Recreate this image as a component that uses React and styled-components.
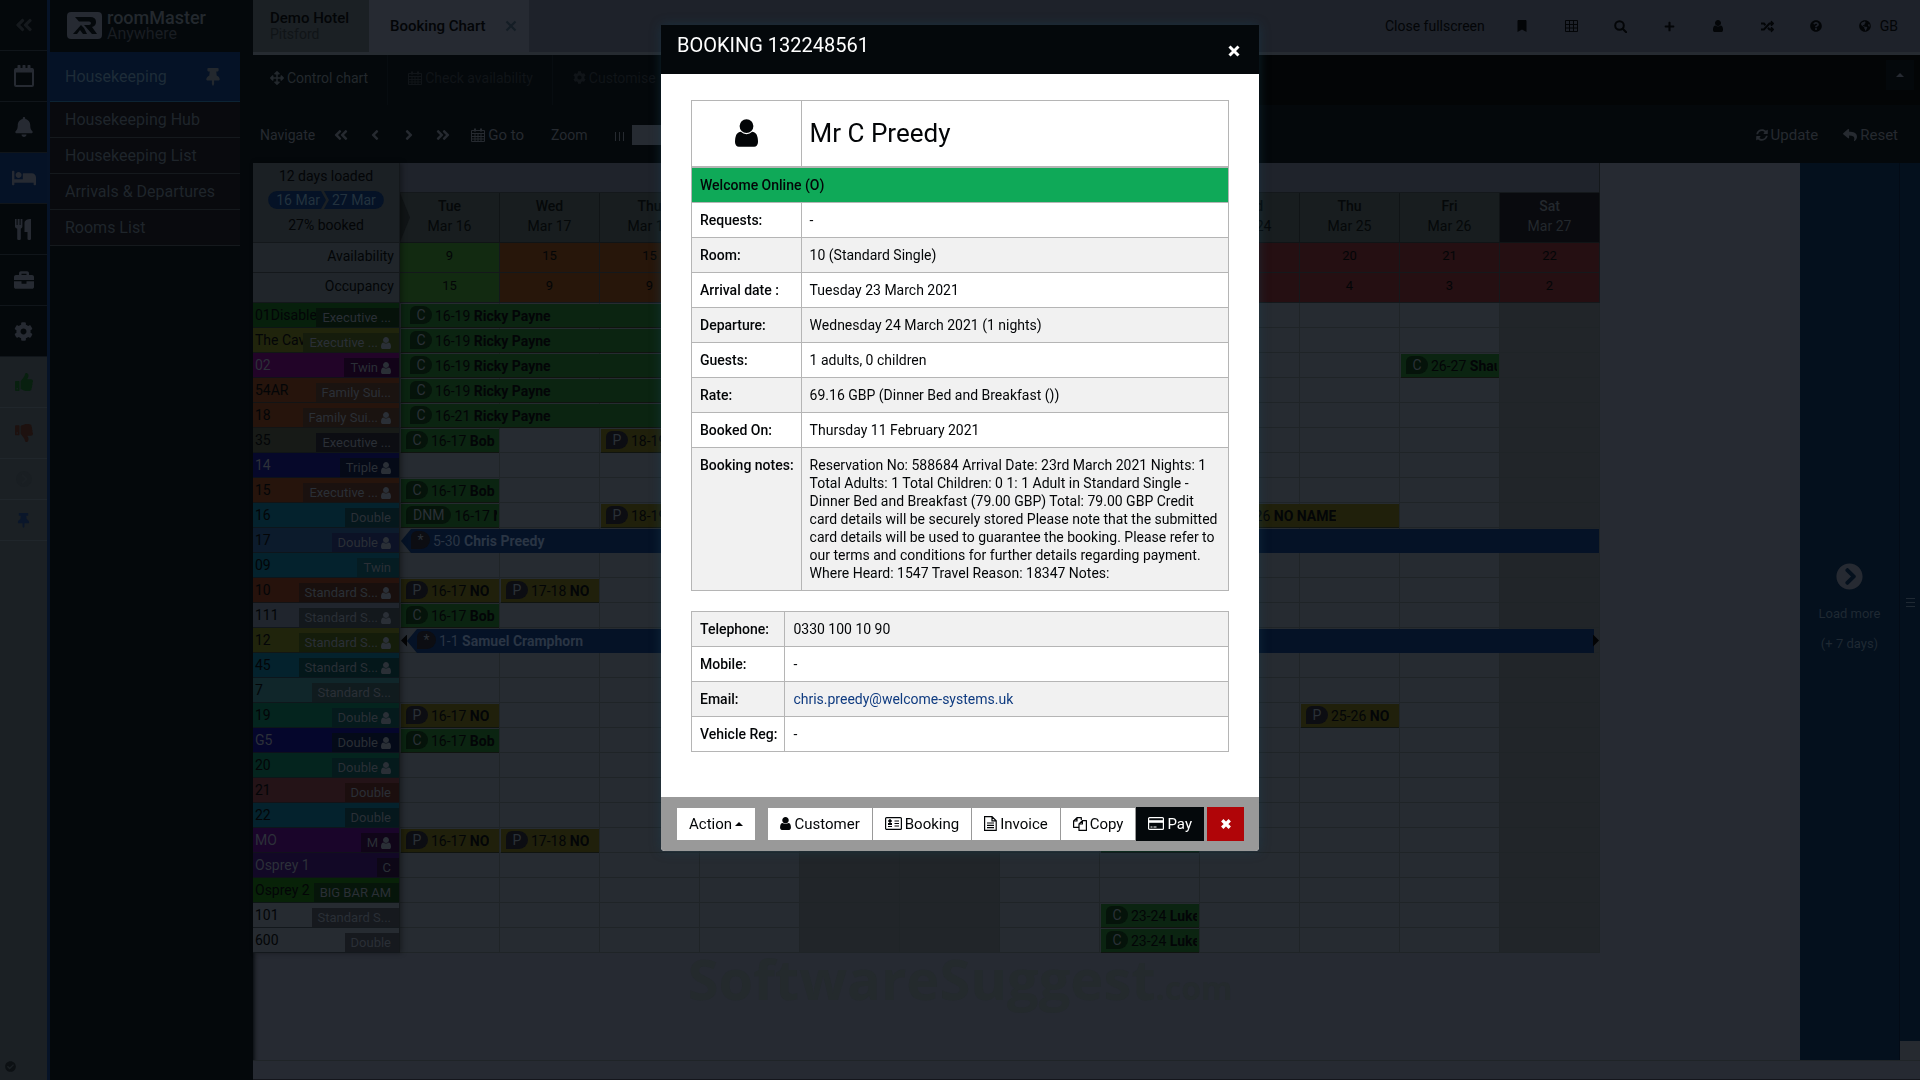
import React, { useState } from "react";
import styled, { createGlobalStyle, css } from "styled-components";
import {
    FaAngleDoubleLeft, FaAngleDoubleRight, FaAngleLeft, FaAngleRight, FaArrowsAlt, FaBed, FaBell,
    FaBookmark, FaBriefcase, FaCheckCircle, FaChevronCircleRight, FaCog, FaGlobeAmericas, FaPlus,
    FaQuestionCircle, FaRandom, FaReply, FaSyncAlt, FaThumbsDown, FaThumbsUp, FaThumbtack,
} from "react-icons/fa";


const GlobalStyle = createGlobalStyle`
    * {
        box-sizing: border-box;
    }

    body {
        margin: 0;
        background: #262a32;
        color: #030507;
        font: 14px/18px Roboto, "Liberation Sans", sans-serif;
        overflow: hidden;
    }

    button {
        margin: 0;
        padding: 0;
        border: 0;
        background: none;
        color: inherit;
        font: inherit;
        cursor: pointer;
    }

    a {
        color: inherit;
        text-decoration: none;
    }

    svg {
        flex: none;
    }
`;

/* ---------- icons ---------- */

const UserIcon = ({ size = 14 }) => (
    <svg width={Math.round(size * 5 / 6)} height={size} viewBox="256 128 1280 1536" fill="currentColor">
        <path d="M1536 1399q0 109-62.5 187t-150.5 78h-854q-88 0-150.5-78t-62.5-187q0-85 8.5-160.5t31.5-152 58.5-131 94-89 134.5-34.5q131 128 313 128t313-128q76 0 134.5 34.5t94 89 58.5 131 31.5 152 8.5 160.5zm-256-887q0 159-112.5 271.5t-271.5 112.5-271.5-112.5-112.5-271.5 112.5-271.5 271.5-112.5 271.5 112.5 112.5 271.5z" />
    </svg>
);

const CrossIcon = ({ size = 12, weight = 3 }) => (
    <svg width={size} height={size} viewBox="0 0 12 12" fill="none" stroke="currentColor" strokeWidth={weight}>
        <path d="M1.500 1.500l9 9M10.500 1.500l-9 9" />
    </svg>
);

const CalendarGridIcon = () => (
    <svg width="14" height="14" viewBox="0 0 14 14" fill="none" stroke="currentColor">
        <path d="M.5 2.5h13v11H.5zM.5 5.5h13M.5 8.5h13M.5 11h13M4 5v8.5M7 5v8.5M10 5v8.5" />
        <path d="M4 .5v3M10 .5v3" strokeWidth="2" />
    </svg>
);

const CalendarIcon = () => (
    <svg width="20" height="22" viewBox="0 0 20 22" fill="none" stroke="currentColor">
        <rect x="1" y="4" width="18" height="17" rx="1" strokeWidth="2" />
        <path d="M1 5.5h18" strokeWidth="4" />
        <path d="M5 1v4M10 1v4M15 1v4" strokeWidth="3" strokeLinecap="round" />
    </svg>
);

const CutleryIcon = () => (
    <svg width="17" height="21" viewBox="0 0 17 21" fill="currentColor">
        <path d="M0 0h1.6v6h1V0h2v6h1V0h1.8v7.5c0 1-.7 1.8-1.6 2.2V20c0 1.300-3.600 1.300-3.600 0V9.700C.9 9.300 0 8.500 0 7.500zM9.500 4C9.500 1.500 12 0 16 0v20c0 1.300-3.500 1.300-3.500 0v-7h-3z" />
    </svg>
);

const TableIcon = () => (
    <svg width="13" height="12" viewBox="0 0 13 12" fill="none" stroke="currentColor">
        <path d="M.5 .5h12v11H.5zM.5 4.500h12M.5 8h12M4.500 .5v11M8.500 .5v11" />
    </svg>
);

const SearchIcon = () => (
    <svg width="13" height="13" viewBox="0 0 13 13" fill="none" stroke="currentColor" strokeWidth="2">
        <circle cx="5.500" cy="5.500" r="4.300" />
        <path d="M8.700 8.700l3.500 3.500" strokeLinecap="round" />
    </svg>
);

const CardIcon = () => (
    <svg width="17" height="13" viewBox="0 0 17 13" fill="none" stroke="currentColor">
        <rect x=".6" y=".6" width="15.800" height="11.800" rx="1" strokeWidth="1.200" />
        <path d="M1 12.500h15" />
        <path d="M3 9.500h4M3 7.500h4M9.500 4h4.500M9.500 6.500h4.500M9.500 9h4.500" />
        <circle cx="5" cy="4" r="1.300" fill="currentColor" />
        <path d="M3 7h4" strokeWidth="2" />
    </svg>
);

const FileIcon = () => (
    <svg width="13" height="15" viewBox="0 0 13 15" fill="none" stroke="currentColor" strokeWidth="1.200">
        <path d="M.6 .6h7.400l4.200 4.200v9.500H.6zM8 .6v4.200h4.200M3 7h7M3 9.300h7M3 11.600h7" />
    </svg>
);

const CopyIcon = () => (
    <svg width="14" height="14" viewBox="0 0 14 14" fill="none" stroke="currentColor" strokeWidth="1.200" strokeLinejoin="round">
        <path d="M6 10.300H.6V4L4 .6h4.300V3M4 .6V4H.6" />
        <path d="M9.400 3.600h4v9.800H6V7zM9.400 3.600V7H6" />
    </svg>
);

const CreditIcon = () => (
    <svg width="16" height="13" viewBox="0 0 16 13" fill="none" stroke="currentColor">
        <rect x=".6" y=".6" width="14.800" height="11.800" rx="1" strokeWidth="1.200" />
        <path d="M1 4.500h14" strokeWidth="2.600" />
        <path d="M2.500 10h2M5.500 10h3" />
    </svg>
);

const CaretUp = ({ width = 8 }) => (
    <svg width={width} height="4" viewBox="0 0 8 4" fill="currentColor">
        <path d="M0 4l4-4 4 4z" />
    </svg>
);

const Logo = () => (
    <svg width="35" height="27" viewBox="0 0 35 27">
        <rect width="35" height="27" rx="4" fill="#262a32" />
        <path d="M8 5h15q6 0 6 5 0 4-4 5l5 7h-5l-8-9h5q2 0 2-1.800T22 9.400H12z" fill="#04080b" />
        <path d="M6 22l8-9 3 3 3 6h-4l-3-4-3 4z" fill="#04080b" />
    </svg>
);

/* ---------- page ---------- */

const Page = styled.div`
    display: flex;
    height: 100vh;
`;

const Rail = styled.nav`
    flex: none;
    display: flex;
    flex-direction: column;
    width: 50px;
    border-right: 3px solid #061327;
    background: #1b2024;
`;

const RailButton = styled.button`
    display: flex;
    align-items: center;
    justify-content: center;
    height: ${props => props.$short ? 41 : 51}px;
    border-bottom: 1px solid ${props => props.$pale ? "#20262b" : "#10151a"};
    background: ${props => props.$active ? "#051226" : props.$pale ? "#1b2024" : "#04080b"};
    color: ${props => props.$color || "#262a32"};
`;

const RailStatus = styled.div`
    margin-top: auto;
    padding: 0 5px 7px;
    color: #0c1013;
    line-height: 12px;
`;

const SidePanel = styled.aside`
    flex: none;
    width: 203px;
    padding-right: 13px;
    background: #04080b;
    color: #23282e;
    font-size: 16px;
`;

const Brand = styled.div`
    display: flex;
    gap: 5px;
    height: 52px;
    padding: 12px 0 0 17px;
`;

const BrandName = styled.div`
    margin-top: -2px;
    font: 500 18px/16px Roboto, sans-serif;

    span {
        display: block;
        color: #191d22;
        font-size: 16px;
        font-weight: 400;
    }
`;

const PanelTitle = styled.a`
    display: flex;
    align-items: center;
    justify-content: space-between;
    height: 50px;
    padding: 0 18px 0 15px;
    border-bottom: 1px solid #0d2434;
    background: #051226;
    color: #1e2c38;
`;

const PanelLink = styled.a`
    display: flex;
    align-items: center;
    height: 36px;
    padding-left: 15px;
    border-bottom: 1px solid #15191d;
    background: #090a0e;
    color: #1f252b;
`;

const Main = styled.main`
    flex: 1;
    min-width: 0;
    display: flex;
    flex-direction: column;
    box-shadow: inset 3px 0 4px -2px #04080b;
`;

const TopBar = styled.header`
    flex: none;
    display: flex;
    height: 55px;
    border-bottom: 3px solid #262b31;
    background: #1e222a;
`;

const HotelTab = styled.div`
    width: 116px;
    padding: 9px 17px;
    background: #1b2024;
    font-size: 15px;
    font-weight: 500;

    span {
        display: block;
        line-height: 14px;
        color: #101417;
        font-size: 14px;
        font-weight: 400;
    }
`;

const ChartTab = styled.div`
    display: flex;
    align-items: center;
    justify-content: space-between;
    width: 160px;
    padding: 0 12px 0 21px;
    background: #262a32;
    font-size: 15px;
    font-weight: 500;

    button {
        display: flex;
        color: #141d25;
    }
`;

const TopActions = styled.div`
    display: flex;
    align-items: center;
    margin-left: auto;
    padding-right: 22px;

    > button {
        display: flex;
        align-items: center;
        justify-content: center;
        gap: 9px;
        width: 49px;
    }

    > button:first-child {
        width: auto;
        margin-right: 13px;
    }

    > button:last-child {
        width: auto;
        margin-left: 18px;
    }
`;

const ControlBar = styled.div`
    flex: none;
    display: flex;
    height: 50px;
    background: linear-gradient(90deg, #04080b 50%, #030506 60%);
`;

const ControlTab = styled.button`
    display: flex;
    align-items: flex-start;
    gap: 3px;
    padding: 14px 19px 0 17px;
    border-right: 1px solid #070c10;
    color: ${props => props.$active ? "#23282d" : "#101418"};

    svg {
        margin-top: 2px;
    }

    & + & {
        padding-left: 20px;
    }
`;

const CollapseButton = styled.button`
    display: flex;
    align-items: center;
    justify-content: center;
    width: 28px;
    height: 30px;
    margin: 5px 6px 0 auto;
    background: #04080b;
    color: #262a32;
`;

const Toolbar = styled.div`
    flex: none;
    display: flex;
    align-items: center;
    height: 58px;
    padding: 2px 22px 0 7px;
    background: #04080b;
    color: #262a30;
`;

const NavGroup = styled.div`
    display: flex;
    gap: 18px;
    padding: 0 20px 0 18px;
`;

const ToolButton = styled.button`
    display: flex;
    align-items: center;
    justify-content: center;
    gap: 3px;
    min-width: 16px;
    font-size: 15px;
`;

const ToolEnd = styled.div`
    display: flex;
    gap: 25px;
    margin-left: auto;
`;

const ZoomLabel = styled.label`
    display: flex;
    align-items: center;
    gap: 28px;
    margin-left: 27px;
`;

const Ticks = styled.span`
    width: 9px;
    height: 9px;
    margin-top: 2px;
    background: repeating-linear-gradient(90deg, #262a30 0 1px, transparent 1px 4px);
`;

const ZoomRange = styled.input`
    appearance: none;
    width: 80px;
    height: 20px;
    margin: 0 0 0 -20px;
    background: #262b32;

    &::-webkit-slider-thumb {
        appearance: none;
    }
`;

/* ---------- chart ---------- */

const Chart = styled.div`
    flex: 1;
    display: flex;
    min-height: 0;
`;

const RoomColumn = styled.div`
    flex: none;
    width: 147px;
    align-self: flex-start;
    position: relative;
    z-index: 1;
    border-right: 1px solid #14181b;
    box-shadow: 2px 0 5px rgba(0, 0, 0, .35), inset 4px 0 4px -2px rgba(4, 8, 11, .6);
`;

const LoadedInfo = styled.div`
    display: flex;
    flex-direction: column;
    align-items: center;
    height: 80px;
    padding-top: 4px;
    border-bottom: 1px solid #14181b;
    background: #1b2024;
`;

const DateRange = styled.div`
    display: flex;
    gap: 2px;
    margin: 6px 0 7px;
    color: #23323e;

    span {
        padding: 0 8px;
        background: #051226;
    }

    span:first-child {
        padding-right: 6px;
        border-radius: 9px 0 0 9px;
        clip-path: polygon(0 0, calc(100% - 5px) 0, 100% 50%, calc(100% - 5px) 100%, 0 100%);
    }

    span:last-child {
        margin-left: -4px;
        border-radius: 0 9px 9px 0;
        clip-path: polygon(0 0, 100% 0, 100% 100%, 0 100%, 5px 50%);
    }
`;

const TotalLabel = styled.div`
    height: 30px;
    padding: 4px 5px 0 0;
    border-bottom: 1px solid #14181b;
    background: #20252a;
    text-align: right;
`;

const Room = styled.div`
    display: flex;
    height: 25px;
    padding: 0 0 1px 2px;
    border-bottom: 1px solid rgba(15, 20, 24, .8);
    background: ${props => props.$bg};
    color: ${props => props.$light ? "#2c3039" : "#030507"};
`;

const RoomName = styled.div`
    flex: 1 1 0;
    min-width: 0;
    padding-top: 3px;
    white-space: nowrap;
`;

const RoomType = styled.div`
    display: flex;
    align-items: center;
    gap: 3px;
    height: 19px;
    margin-top: 5px;
    padding: 0 8px 0 6px;
    background: ${props => props.$bg};
    color: #2a2f36;
    font-size: 13px;
    white-space: nowrap;
`;

const Days = styled.div`
    flex: none;
    align-self: flex-start;
    display: grid;
    grid-template-columns: repeat(12, 100px);
`;

const MonthStrip = styled.div`
    grid-column: 1 / -1;
    height: 30px;
    border-right: 1px solid #14181b;
    border-bottom: 1px solid #14181b;
    background: #1f232b;
`;

const DayHead = styled.div`
    position: relative;
    height: 50px;
    padding-top: 3px;
    border-right: 1px solid #101416;
    border-bottom: 1px solid #101416;
    background: ${props => props.$last ? "#090a0e" : "#181d1f"};
    color: ${props => props.$last ? "#23282d" : "#050809"};
    line-height: 20px;
    text-align: center;

    b {
        display: block;
        font-weight: 500;
    }

    &:nth-child(2)::before {
        content: "";
        position: absolute;
        left: 0;
        top: 0;
        width: 10px;
        height: 49px;
        background: #101416;
        clip-path: polygon(0 0, 100% 50%, 0 100%);
    }
`;

const levels = {
    good: "#122a11",
    middle: "#27160a",
    poor: "#250f12",
};

const Total = styled.div`
    height: 30px;
    padding-top: 4px;
    border-right: 1px solid #14181b;
    border-bottom: 1px solid #14181b;
    background: ${props => levels[props.$level]};
    font-size: 13px;
    text-align: center;
`;

const RoomDays = styled.div`
    grid-column: 1 / -1;
    display: grid;
    grid-template-columns: subgrid;
    height: 25px;
`;

const DayCell = styled.div`
    grid-row: 1;
    grid-column: ${props => props.$day};
    border-right: 1px solid #1f2427;
    border-bottom: 1px solid #1f2427;
    background: ${props => props.$weekend ? "#212529" : "#262b31"};
`;

const Booking = styled.div`
    grid-row: 1;
    grid-column: ${props => props.$from} / span ${props => props.$nights};
    display: flex;
    gap: 3px;
    z-index: 0;
    min-width: 0;
    margin: 1px 1px 0 1px;
    padding: 2px 2px 0 ${props => props.$nights > 1 ? 9 : 5}px;
    border-bottom: 1px solid #10140f;
    background: ${props => props.$kind === "P" ? "#20200b" : "#0b2411"};
    overflow: hidden;
    white-space: nowrap;

    b {
        font-weight: 700;
    }

    ${props => props.$kind === "*" && css`
        padding-left: 10px;
        border-bottom: 0;
        background: #051226;
        color: #2a3544;
        clip-path: polygon(10px 0, 100% 0, 100% 100%, 10px 100%, 0 50%);
    `}

    ${props => props.$open && css`
        margin-left: 7px;
        margin-right: 6px;
    `}
`;

const BookingText = styled.span`
    min-width: 0;
    padding-top: 1px;
    overflow: hidden;
`;

const Status = styled.span`
    flex: none;
    align-self: flex-start;
    min-width: ${props => props.$kind === "*" ? 19 : 22}px;
    height: 18px;
    padding: 0 ${props => props.$kind === "DNM" ? 7 : 6}px;
    border-radius: 6px 9px 9px 0;
    background: ${props => props.$kind === "P" || props.$kind === "*" ? "#0c0d12" : "#05130a"};
    color: #2a3036;
    line-height: 18px;
    text-align: center;
`;

const OpenEnd = styled.div`
    grid-row: 1;
    grid-column: ${props => props.$right ? 12 : 1};
    justify-self: ${props => props.$right ? "end" : "start"};
    align-self: center;
    z-index: 1;
    width: 6px;
    height: 12px;
    margin: 0 1px;
    background: #030405;
    clip-path: ${props => props.$right ? "polygon(0 0, 100% 50%, 0 100%)" : "polygon(100% 0, 0 50%, 100% 100%)"};
`;

const LoadMore = styled.button`
    display: flex;
    flex-direction: column;
    align-items: center;
    justify-content: center;
    gap: 12px;
    width: 100px;
    padding-bottom: 8px;
    margin-left: auto;
    border-right: 1px solid #030b16;
    background: #04101d;
    color: #1f2933;
    font-size: 13px;

    svg {
        margin-bottom: 3px;
        color: #262a32;
    }
`;

const Handle = styled.div`
    display: flex;
    flex-direction: column;
    align-items: center;
    justify-content: center;
    width: 20px;
    border-bottom: 19px solid #262a30;
    background: #04101d;

    &::before {
        content: "";
        width: 9px;
        height: 9px;
        background: repeating-linear-gradient(#1f2933 0 1px, transparent 1px 4px);
    }
`;

const BottomBar = styled.div`
    flex: none;
    height: 20px;
    border-top: 1px solid #1f2427;
    border-bottom: 1px solid #14161c;
    background: #262a32;
`;

const Watermark = styled.div`
    position: fixed;
    right: 0;
    bottom: 62px;
    left: 0;
    color: #242a2d;
    font: 700 56px/60px "Open Sans", sans-serif;
    text-align: center;
    pointer-events: none;

    small {
        font-size: 32px;
    }
`;

/* ---------- booking dialog ---------- */

const Dialog = styled.section`
    position: fixed;
    top: 25px;
    left: 50%;
    width: 598px;
    margin-left: -299px;
    z-index: 5;
    border-radius: 4px;
    background: #fff;
    box-shadow: 0 0 12px rgba(24, 66, 88, .45);
`;

const DialogHeader = styled.header`
    display: flex;
    align-items: flex-start;
    justify-content: space-between;
    height: 49px;
    padding: 10px 8px 0 16px;
    background: #04080b;
    color: #fff;

    h2 {
        margin: 0;
        font: 400 20px/20px Roboto, sans-serif;
    }

    button {
        display: flex;
        align-items: center;
        justify-content: center;
        width: 34px;
        height: 32px;
        color: #fff;
    }
`;

const DialogBody = styled.div`
    padding: 26px 30px 45px;
`;

const Details = styled.table`
    width: 100%;
    margin-bottom: 20px;
    border-collapse: collapse;

    &:last-child {
        margin-bottom: 0;
    }

    th,
    td {
        padding: 8px;
        border: 1px solid #b5b5b5;
        text-align: left;
        vertical-align: top;
    }

    th {
        width: ${props => props.$labels}px;
        padding-right: 7px;
        font-weight: 500;
        white-space: nowrap;
    }

    a {
        color: #0f3b80;
    }
`;

const DetailRow = styled.tr`
    background: ${props => props.$shade ? "#f1f1f1" : "#fff"};
`;

const GuestRow = styled.tr`
    height: 66px;

    && th,
    && td {
        border-bottom-width: 2px;
        vertical-align: middle;
        font-size: 26px;
        line-height: 30px;
    }

    && th {
        text-align: center;
    }

    svg {
        display: block;
        margin: 0 auto;
    }
`;

const SourceRow = styled.tr`
    background: #0fa958;
`;

const DialogFooter = styled.footer`
    display: flex;
    align-items: center;
    height: 54px;
    padding: 0 15px 0 16px;
    border-radius: 0 0 4px 4px;
    background: #999;
`;

const ButtonGroup = styled.div`
    display: flex;
    align-items: center;
    gap: 1px;
    margin-left: auto;
`;

const FooterButton = styled.button`
    display: flex;
    align-items: center;
    gap: 3px;
    height: 32px;
    padding: 0 12px;
    background: #fff;
    font-size: 15px;

    ${props => props.$tone && css`
        height: 34px;
        background: ${props.$tone};
        color: #fff;
    `}

    ${props => props.$last && css`
        justify-content: center;
        width: 37px;
        margin-left: 2px;
        padding: 0;
    `}
`;


const days = [
    ["Tue", "Mar 16", 9, 15, "good"],
    ["Wed", "Mar 17", 15, 9, "middle"],
    ["Thu", "Mar 18", 15, 9, "middle"],
    ["Fri", "Mar 19", 18, 6, "middle"],
    ["Sat", "Mar 20", 18, 6, "middle"],
    ["Sun", "Mar 21", 19, 5, "poor"],
    ["Mon", "Mar 22", 19, 5, "poor"],
    ["Tue", "Mar 23", 18, 6, "poor"],
    ["Wed", "Mar 24", 19, 5, "poor"],
    ["Thu", "Mar 25", 20, 4, "poor"],
    ["Fri", "Mar 26", 21, 3, "poor"],
    ["Sat", "Mar 27", 22, 2, "poor"],
];

const weekend = [5, 6, 12];

const ricky = (dates, nights) => ["C", dates, "Ricky Payne", 1, nights];
const bob = ["C", "16-17", "Bob", 1, 1];

// name, type, has guest, colour, type colour, light text, bookings [kind, dates, guest, from, nights]
const rooms = [
    ["01Disabled", "Executive ...", 0, "#07200c", "#06120a", 0, [ricky("16-19", 3)]],
    ["The Cave", "Executive ...", 1, "#20240c", "#151c0c", 0, [ricky("16-19", 3)]],
    ["02", "Twin", 1, "#220428", "#120318", 1, [ricky("16-19", 3), ["C", "26-27", "Shaun", 11, 1]]],
    ["54AR", "Family Sui...", 0, "#26140c", "#1a1310", 0, [ricky("16-19", 3)]],
    ["18", "Family Sui...", 1, "#26140c", "#1a1310", 0, [ricky("16-21", 5)]],
    ["35", "Executive ...", 0, "#171a17", "#0c0d12", 0, [bob, ["P", "18-19", "NO", 3, 1]]],
    ["14", "Triple", 1, "#06082a", "#050a17", 1, []],
    ["15", "Executive ...", 1, "#26140c", "#1a110f", 0, [bob]],
    ["16", "Double", 0, "#04222d", "#05171c", 0, [
        ["DNM", "16-17", "Name", 1, 1], ["P", "18-19", "NO", 3, 1], ["P", "24-26", "NO NAME", 9, 2],
    ]],
    ["17", "Double", 1, "#0c1b2c", "#0c1226", 0, [["*", "5-30", "Chris Preedy", 1, 12]]],
    ["09", "Twin", 0, "#04222d", "#051c22", 0, []],
    ["10", "Standard S...", 1, "#26120c", "#180f0d", 0, [["P", "16-17", "NO", 1, 1], ["P", "17-18", "NO", 2, 1]]],
    ["111", "Standard S...", 1, "#20252d", "#13181c", 0, [bob]],
    ["12", "Standard S...", 1, "#20240c", "#141c0a", 0, [["*", "1-1", "Samuel Cramphorn", 1, 12, true]]],
    ["45", "Standard S...", 1, "#04222d", "#04171a", 0, []],
    ["7", "Standard S...", 0, "#10262a", "#101b1e", 0, []],
    ["19", "Double", 1, "#04241e", "#051a1c", 0, [["P", "16-17", "NO", 1, 1], ["P", "25-26", "NO", 10, 1]]],
    ["G5", "Double", 1, "#05062c", "#040a18", 1, [bob]],
    ["20", "Double", 1, "#04241e", "#051a1c", 0, []],
    ["21", "Double", 0, "#241317", "#1b0e0e", 0, []],
    ["22", "Double", 0, "#04222d", "#05171c", 0, []],
    ["MO", "M", 1, "#1a052a", "#100518", 1, [
        ["P", "16-17", "NO", 1, 1], ["P", "17-18", "NO", 2, 1], ["C", "23-24", "Luke", 8, 1],
    ]],
    ["Osprey 1", "C", 0, "#120826", "#0d0716", 1, []],
    ["Osprey 2", "BIG BAR AM", 0, "#082208", "#06150a", 0, []],
    ["101", "Standard S...", 0, "#262b31", "#16191e", 0, [["C", "23-24", "Luke", 8, 1]]],
    ["600", "Double", 0, "#262b31", "#16191e", 0, [["C", "23-24", "Luke", 8, 1]]],
];

const bookingDetails = [
    ["Requests:", "-"],
    ["Room:", "10 (Standard Single)"],
    ["Arrival date :", "Tuesday 23 March 2021"],
    ["Departure:", "Wednesday 24 March 2021 (1 nights)"],
    ["Guests:", "1 adults, 0 children"],
    ["Rate:", "69.16 GBP (Dinner Bed and Breakfast ())"],
    ["Booked On:", "Thursday 11 February 2021"],
    ["Booking notes:", "Reservation No: 588684 Arrival Date: 23rd March 2021 Nights: 1 Total Adults: 1 Total Children: 0 1: 1 Adult in Standard Single - Dinner Bed and Breakfast (79.00 GBP) Total: 79.00 GBP Credit card details will be securely stored Please note that the submitted card details will be used to guarantee the booking. Please refer to our terms and conditions for further details regarding payment. Where Heard: 1547 Travel Reason: 18347 Notes:"],
];

const contactDetails = [
    ["Telephone:", "0330 100 10 90"],
    ["Mobile:", "-"],
    ["Email:", <a href="mailto:chris.preedy@welcome-systems.uk">chris.preedy@welcome-systems.uk</a>],
    ["Vehicle Reg:", "-"],
];


const SideRail = () => (
    <Rail>
        <RailButton aria-label="Collapse"><FaAngleDoubleLeft size={20} color="#15191d" /></RailButton>
        <RailButton aria-label="Calendar"><CalendarIcon /></RailButton>
        <RailButton aria-label="Alerts"><FaBell size={20} /></RailButton>
        <RailButton aria-label="Housekeeping" $active><FaBed size={24} /></RailButton>
        <RailButton aria-label="Restaurant"><CutleryIcon /></RailButton>
        <RailButton aria-label="Business"><FaBriefcase size={20} /></RailButton>
        <RailButton aria-label="Settings"><FaCog size={19} /></RailButton>
        <RailButton aria-label="Like" $pale $color="#08200f"><FaThumbsUp size={18} /></RailButton>
        <RailButton aria-label="Dislike" $pale $color="#1d110f"><FaThumbsDown size={18} /></RailButton>
        <RailButton aria-label="Add" $pale $short $color="#191e22"><FaChevronCircleRight size={16} /></RailButton>
        <RailButton aria-label="Pin" $pale $short $color="#0a162a"><FaThumbtack size={15} /></RailButton>
        <RailStatus><FaCheckCircle size={11} /></RailStatus>
    </Rail>
);

const SideMenu = () => (
    <SidePanel>
        <Brand>
            <Logo />
            <BrandName>roomMaster<span>Anywhere</span></BrandName>
        </Brand>
        <PanelTitle href="#housekeeping">Housekeeping <FaThumbtack size={18} color="#23282e" /></PanelTitle>
        {["Housekeeping Hub", "Housekeeping List", "Arrivals & Departures", "Rooms List"].map(item => (
            <PanelLink href="#menu" key={item}>{item}</PanelLink>
        ))}
    </SidePanel>
);

const BookingChart = () => (
    <Chart>
        <RoomColumn>
            <LoadedInfo>
                12 days loaded
                <DateRange><span>16 Mar</span><span>27 Mar</span></DateRange>
                27% booked
            </LoadedInfo>
            <TotalLabel>Availability</TotalLabel>
            <TotalLabel>Occupancy</TotalLabel>
            {rooms.map(([name, type, guest, bg, typeBg, light]) => (
                <Room key={name} $bg={bg} $light={light}>
                    <RoomName>{name}</RoomName>
                    <RoomType $bg={typeBg}>{type}{guest ? <UserIcon size={12} /> : null}</RoomType>
                </Room>
            ))}
        </RoomColumn>
        <Days>
            <MonthStrip />
            {days.map(([day, date], index) => (
                <DayHead key={date} $last={index === 11}><b>{day}</b>{date}</DayHead>
            ))}
            {days.map(day => <Total key={day[1]} $level={day[4]}>{day[2]}</Total>)}
            {days.map(day => <Total key={day[1]} $level={day[4]}>{day[3]}</Total>)}
            {rooms.map(room => (
                <RoomDays key={room[0]}>
                    {days.map((day, index) => (
                        <DayCell key={day[1]} $day={index + 1} $weekend={weekend.includes(index + 1)} />
                    ))}
                    {room[6].map(([kind, dates, guest, from, nights, open]) => (
                        <React.Fragment key={from}>
                            <Booking $kind={kind} $from={from} $nights={nights} $open={open}>
                                <Status $kind={kind}>{kind}</Status>
                                <BookingText>{dates} <b>{guest}</b></BookingText>
                            </Booking>
                            {open && <OpenEnd />}
                            {open && <OpenEnd $right />}
                        </React.Fragment>
                    ))}
                </RoomDays>
            ))}
        </Days>
        <LoadMore>
            <FaChevronCircleRight size={27} />
            <span>Load more</span>
            <span>(+ 7 days)</span>
        </LoadMore>
        <Handle />
    </Chart>
);

const BookingDialog = ({ onClose }) => (
    <Dialog role="dialog" aria-labelledby="booking-title">
        <DialogHeader>
            <h2 id="booking-title">BOOKING 132248561</h2>
            <button aria-label="Close" onClick={onClose}><CrossIcon size={12} /></button>
        </DialogHeader>
        <DialogBody>
            <Details $labels={109}>
                <tbody>
                    <GuestRow>
                        <th><UserIcon size={28} /></th>
                        <td>Mr C Preedy</td>
                    </GuestRow>
                    <SourceRow><th colSpan="2">Welcome Online (O)</th></SourceRow>
                    {bookingDetails.map(([label, value], index) => (
                        <DetailRow key={label} $shade={index % 2 === 1}>
                            <th scope="row">{label}</th>
                            <td>{value}</td>
                        </DetailRow>
                    ))}
                </tbody>
            </Details>
            <Details $labels={92}>
                <tbody>
                    {contactDetails.map(([label, value], index) => (
                        <DetailRow key={label} $shade={index % 2 === 0}>
                            <th scope="row">{label}</th>
                            <td>{value}</td>
                        </DetailRow>
                    ))}
                </tbody>
            </Details>
        </DialogBody>
        <DialogFooter>
            <FooterButton>Action <CaretUp /></FooterButton>
            <ButtonGroup>
                <FooterButton><UserIcon size={13} />Customer</FooterButton>
                <FooterButton><CardIcon />Booking</FooterButton>
                <FooterButton><FileIcon />Invoice</FooterButton>
                <FooterButton><CopyIcon />Copy</FooterButton>
                <FooterButton $tone="#04080b"><CreditIcon />Pay</FooterButton>
                <FooterButton $tone="#b00508" $last aria-label="Cancel booking" onClick={onClose}>
                    <CrossIcon size={10} weight={4} />
                </FooterButton>
            </ButtonGroup>
        </DialogFooter>
    </Dialog>
);

const App = () => {
    const [open, setOpen] = useState(true);

    return (
        <>
            <GlobalStyle />
            <Page>
                <SideRail />
                <SideMenu />
                <Main>
                    <TopBar>
                        <HotelTab>Demo Hotel<span>Pitsford</span></HotelTab>
                        <ChartTab>
                            Booking Chart
                            <button aria-label="Close tab"><CrossIcon size={12} weight={2} /></button>
                        </ChartTab>
                        <TopActions>
                            <button>Close fullscreen</button>
                            <button aria-label="Bookmarks"><FaBookmark size={12} /></button>
                            <button aria-label="Table"><TableIcon /></button>
                            <button aria-label="Search"><SearchIcon /></button>
                            <button aria-label="Add"><FaPlus size={11} /></button>
                            <button aria-label="User"><UserIcon size={12} /></button>
                            <button aria-label="Switch"><FaRandom size={13} /></button>
                            <button aria-label="Help"><FaQuestionCircle size={12} /></button>
                            <button><FaGlobeAmericas size={12} />GB</button>
                        </TopActions>
                    </TopBar>
                    <ControlBar>
                        <ControlTab $active><FaArrowsAlt size={14} />Control chart</ControlTab>
                        <ControlTab><CalendarGridIcon />Check availability</ControlTab>
                        <ControlTab><FaCog size={13} />Customise</ControlTab>
                        <CollapseButton aria-label="Collapse toolbar"><CaretUp /></CollapseButton>
                    </ControlBar>
                    <Toolbar>
                        Navigate
                        <NavGroup>
                            <ToolButton aria-label="First"><FaAngleDoubleLeft size={16} /></ToolButton>
                            <ToolButton aria-label="Previous"><FaAngleLeft size={16} /></ToolButton>
                            <ToolButton aria-label="Next"><FaAngleRight size={16} /></ToolButton>
                            <ToolButton aria-label="Last"><FaAngleDoubleRight size={16} /></ToolButton>
                        </NavGroup>
                        <ToolButton><CalendarGridIcon />Go to</ToolButton>
                        <ZoomLabel>
                            Zoom
                            <Ticks />
                            <ZoomRange type="range" />
                        </ZoomLabel>
                        <ToolEnd>
                            <ToolButton><FaSyncAlt size={12} />Update</ToolButton>
                            <ToolButton><FaReply size={14} />Reset</ToolButton>
                        </ToolEnd>
                    </Toolbar>
                    <BookingChart />
                    <BottomBar />
                </Main>
            </Page>
            <Watermark>SoftwareSuggest<small>.com</small></Watermark>
            {open && <BookingDialog onClose={() => setOpen(false)} />}
        </>
    );
};

export default App;
